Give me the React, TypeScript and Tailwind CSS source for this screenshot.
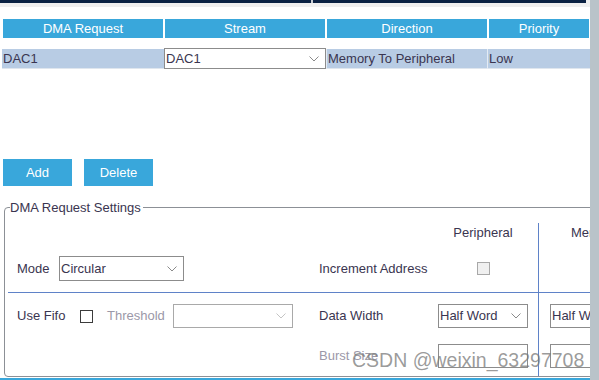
import React from 'react';

const Chevron = ({ color = '#8a8a8a' }: { color?: string }) => (
    <svg width="10" height="6" viewBox="0 0 10 6" className="shrink-0">
        <path d="M0.5 0.5 L5 5 L9.5 0.5" fill="none" stroke={color} strokeWidth="1" />
    </svg>
);

interface SelectProps {
    value?: string;
    className?: string;
    muted?: boolean;
    noChevron?: boolean;
}

const Select: React.FC<SelectProps> = ({ value = '', className = '', muted, noChevron }) => (
    <div className={`flex items-center justify-between border bg-white shrink-0 overflow-hidden ${muted ? 'border-[#a9a9a9]' : 'border-[#8c8c8c]'} ${className}`}>
        <span className="pl-[1px] whitespace-nowrap">{value}</span>
        {!noChevron && (
            <span className="pr-[6px]">
                <Chevron color={muted ? '#c4c4c4' : '#8a8a8a'} />
            </span>
        )}
    </div>
);

const headers = [
    { label: 'DMA Request', w: 'w-[160px]' },
    { label: 'Stream', w: 'w-[160px]' },
    { label: 'Direction', w: 'w-[160px]' },
    { label: 'Priority', w: 'w-[100px]' },
];

export default function App() {
    return (
        <div className="w-[599px] h-[380px] bg-white flex overflow-hidden relative font-['Liberation_Sans',Arial,sans-serif] text-[13px] text-[#3a3550]">
            {/* main panel */}
            <div className="w-[590px] h-full overflow-hidden flex flex-col">
                {/* top bar */}
                <div className="flex h-[3px] bg-[#efefef]">
                    <div className="w-[311px] bg-[#0b2243]" />
                    <div className="w-[2px] bg-[#c9ced4]" />
                    <div className="w-[273px] bg-[#0b2243]" />
                </div>
                <div className="h-[4px] bg-[#efefef]" />

                {/* table header */}
                <div className="flex gap-[2px] pl-[3px] mt-[12px] h-[19px] shrink-0">
                    {headers.map((h) => (
                        <div key={h.label} className={`${h.w} bg-[#39a7db] text-white flex items-center justify-center whitespace-nowrap shrink-0`}>
                            {h.label}
                        </div>
                    ))}
                </div>

                {/* table row */}
                <div className="flex items-center pl-[2px] mt-[10px] h-[21px] shrink-0">
                    <div className="w-[162px] h-[20px] mt-[1px] bg-[#b8cce4] border-b border-[#dfe6ee] flex items-center pl-[1px]">DAC1</div>
                    <Select value="DAC1" className="w-[162px] h-[21px]" />
                    <div className="w-[1px] h-[20px] mt-[1px] bg-[#e4ebf3]" />
                    <div className="w-[160px] h-[20px] mt-[1px] bg-[#b8cce4] border-b border-[#dfe6ee] flex items-center pl-[1px] whitespace-nowrap">Memory To Peripheral</div>
                    <div className="w-[1px] h-[20px] mt-[1px] bg-[#e4ebf3]" />
                    <div className="flex-1 h-[20px] mt-[1px] bg-[#b8cce4] border-b border-[#dfe6ee] flex items-center pl-[1px]">Low</div>
                </div>

                {/* buttons */}
                <div className="flex gap-[12px] pl-[3px] mt-[90px] shrink-0">
                    <button className="w-[69px] h-[27px] bg-[#39a7db] text-white">Add</button>
                    <button className="w-[69px] h-[27px] bg-[#39a7db] text-white">Delete</button>
                </div>

                {/* settings */}
                <fieldset className="ml-[4px] mt-[14px] w-[640px] shrink-0 border border-[#8c9096] rounded-[4px] p-0">
                    <legend className="ml-[5px] pr-[2px] leading-[15px]">DMA Request Settings</legend>

                    {/* upper block */}
                    <div className="ml-[3px] h-[78px] border-b border-[#5f82c8] flex">
                        <div className="w-[530px]">
                            <div className="h-[41px]">
                                <div className="ml-[430px] w-[90px] pt-[10px] leading-[15px] text-center">Peripheral</div>
                            </div>
                            <div className="h-[25px] flex items-center">
                                <span className="ml-[9px] w-[42px]">Mode</span>
                                <Select value="Circular" className="w-[125px] h-[25px]" />
                                <span className="ml-[135px] w-[158px]">Increment Address</span>
                                <div className="w-[13px] h-[13px] border border-[#a8a8a8] bg-[#f0f0f0]" />
                            </div>
                        </div>
                        <div className="mt-[8px] flex-1 border-l border-[#5f82c8]">
                            <div className="pl-[32px] pt-[2px] leading-[15px]">Memory</div>
                        </div>
                    </div>

                    {/* lower block */}
                    <div className="ml-[3px] h-[83px] flex">
                        <div className="w-[530px]">
                            <div className="mt-[11px] h-[24px] flex items-center">
                                <span className="ml-[9px] w-[63px]">Use Fifo</span>
                                <div className="w-[13px] h-[13px] border border-[#3c3c3c] bg-white" />
                                <span className="ml-[14px] w-[66px] text-[#9b98a8]">Threshold</span>
                                <Select muted className="w-[120px] h-[24px]" />
                                <span className="ml-[26px] w-[119px]">Data Width</span>
                                <Select value="Half Word" className="w-[90px] h-[24px]" />
                            </div>
                            <div className="mt-[16px] h-[24px] flex items-center">
                                <span className="ml-[311px] w-[119px] text-[#9b98a8]">Burst Size</span>
                                <Select noChevron className="w-[90px] h-[24px]" />
                            </div>
                        </div>
                        <div className="flex-1 border-l border-[#5f82c8] pl-[11px]">
                            <Select value="Half Word" className="mt-[11px] w-[90px] h-[24px]" />
                            <Select noChevron className="mt-[16px] w-[90px] h-[24px]" />
                        </div>
                    </div>
                </fieldset>

                <div className="mt-[1px] h-[2px] bg-[#39a7db] shrink-0" />
            </div>

            {/* scrollbar */}
            <div className="w-[9px] h-full bg-[#b9c3c9]" />

            {/* watermark */}
            <div className="absolute left-[352px] top-[350px] text-[19.5px] leading-[20px] text-[#7a7a7a]/75 whitespace-nowrap pointer-events-none">
                CSDN @weixin_63297708
            </div>
        </div>
    );
}
